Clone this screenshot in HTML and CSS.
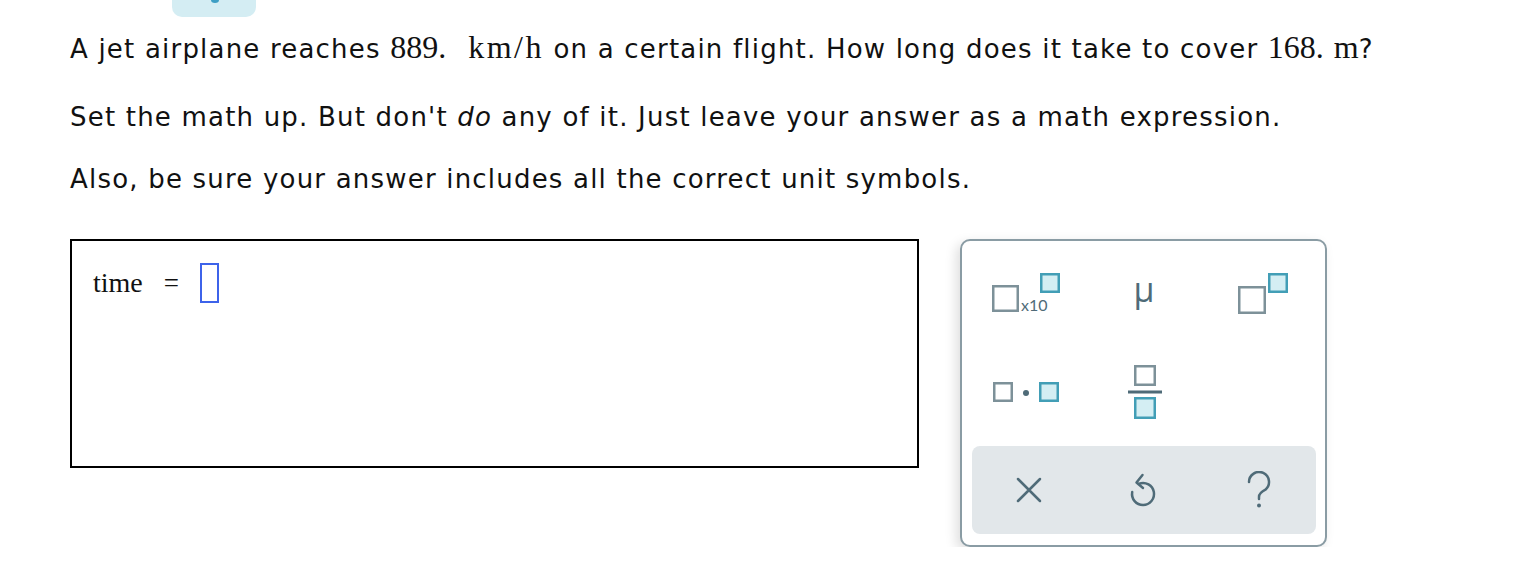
FILE: index.html
```html
<!DOCTYPE html>
<html>
<head>
<meta charset="utf-8">
<link rel="stylesheet" href="styles.css">
</head>
<body>
<div class="tab"><span class="tab-dot"></span></div>
<main class="content">
  <p class="q q1">A jet airplane reaches <span class="math">889.</span><span class="math unit">km/h</span> on a certain flight. How long does it take to cover <span class="math">168.</span><span class="math unit2">m</span>?</p>
  <p class="q q2">Set the math up. But don't <em>do</em> any of it. Just leave your answer as a math expression.</p>
  <p class="q q3">Also, be sure your answer includes all the correct unit symbols.</p>

  <div class="answer-row">
    <div class="answer-box">
      <div class="equation">
        <span class="var">time</span>
        <span class="eq">=</span>
        <span class="slot"></span>
      </div>
    </div>

    <div class="keypad">
      <div class="keys">
        <button class="key key-sci" aria-label="scientific notation">
          <svg width="70" height="42" viewBox="0 0 70 42">
            <rect class="g" x="3.25" y="15.25" width="24.5" height="24.5"/>
            <text class="x10" x="31" y="40">x10</text>
            <rect class="t" x="51.25" y="3.25" width="17.5" height="17.5"/>
          </svg>
        </button>
        <button class="key key-mu" aria-label="micro">μ</button>
        <button class="key key-sup" aria-label="superscript">
          <svg width="54" height="43" viewBox="0 0 54 43">
            <rect class="g" x="3.25" y="16.25" width="25.5" height="25.5"/>
            <rect class="t" x="33.25" y="3.25" width="17.5" height="17.5"/>
          </svg>
        </button>
        <button class="key key-dot" aria-label="multiply">
          <svg width="72" height="26" viewBox="0 0 72 26">
            <rect class="g" x="4.25" y="4.25" width="17.5" height="17.5"/>
            <circle class="d" cx="36" cy="14" r="3"/>
            <rect class="t" x="50.25" y="4.25" width="17.5" height="17.5"/>
          </svg>
        </button>
        <button class="key key-frac" aria-label="fraction">
          <svg width="38" height="58" viewBox="0 0 38 58">
            <rect class="g" x="9.25" y="3.25" width="19.5" height="18.5"/>
            <line class="bar" x1="2" y1="29" x2="36" y2="29"/>
            <rect class="t" x="9.25" y="35.25" width="19.5" height="19.5"/>
          </svg>
        </button>
        <span class="key empty"></span>
      </div>
      <div class="actions">
        <button class="act" aria-label="clear">
          <svg width="26" height="26" viewBox="0 0 26 26">
            <path class="s" d="M2 2 L24 24 M24 2 L2 24"/>
          </svg>
        </button>
        <button class="act" aria-label="undo">
          <svg width="30" height="36" viewBox="0 0 30 36">
            <path class="s" d="M10.2 11.7 A11 11 0 1 1 3.2 20.1"/>
            <path class="s" d="M13.5 3 L7.5 10.5 L14 16"/>
          </svg>
        </button>
        <button class="act" aria-label="help">
          <svg width="26" height="38" viewBox="0 0 26 38">
            <path class="s" d="M3 11 A10 10 0 1 1 19.4 18.7 Q13 22 13 26 V28"/>
            <circle class="d" cx="13" cy="34.5" r="2"/>
          </svg>
        </button>
      </div>
    </div>
  </div>
</main>
</body>
</html>
```

FILE: styles.css
```css
* { box-sizing: border-box; }

body {
  margin: 0;
  background: #ffffff;
  font-family: "DejaVu Sans", Verdana, sans-serif;
  color: #111111;
}

.tab {
  position: relative;
  margin-left: 172px;
  width: 84px;
  height: 17px;
  background: #d4edf3;
  border-radius: 0 0 10px 10px;
}

.tab-dot {
  position: absolute;
  left: 39px;
  top: -3px;
  width: 8px;
  height: 6px;
  border-radius: 50%;
  background: #3e9fc4;
}

.content {
  padding-left: 70px;
}

.q {
  margin: 0;
  font-size: 26px;
  letter-spacing: 1.2px;
  line-height: 30px;
  white-space: nowrap;
}

.q1 { margin-top: 15px; }
.q2 { margin-top: 38px; }
.q3 { margin-top: 32px; }

.math {
  font-family: "Liberation Serif", "Times New Roman", serif;
  font-size: 32px;
  letter-spacing: 0;
}

.unit { margin-left: 22px; letter-spacing: 2.5px; }
.unit2 { margin-left: 10px; }

.answer-row {
  display: flex;
  align-items: flex-start;
  margin-top: 45px;
}

.answer-box {
  width: 849px;
  height: 229px;
  border: 2px solid #000000;
  padding: 22px 0 0 21px;
}

.equation {
  display: flex;
  align-items: center;
  font-family: "Liberation Serif", "Times New Roman", serif;
  font-size: 28px;
  color: #111111;
}

.eq {
  margin-left: 21px;
  font-size: 27px;
}

.slot {
  width: 19px;
  height: 40px;
  margin-left: 21px;
  border: 2px solid #3d63ea;
}

.keypad {
  margin-left: 41px;
  width: 367px;
  height: 308px;
  border: 2px solid #8a9ca4;
  border-radius: 10px;
  background: #ffffff;
  box-shadow: -4px 4px 12px rgba(0, 0, 0, 0.13);
  padding: 1px 9px 10px 10px;
}

.keys {
  display: grid;
  grid-template-columns: repeat(3, 1fr);
  grid-template-rows: 100px 100px;
}

.key, .act {
  border: 0;
  background: transparent;
  padding: 0;
  display: flex;
  align-items: center;
  justify-content: center;
  color: #4f6b78;
}

.key-sci svg { margin-right: 8px; }
.key-sup svg { margin-left: 8px; }
.key-dot svg { margin-right: 6px; }
.key-frac svg { margin-left: 2px; }

.key-mu {
  font-family: "Open Sans", sans-serif;
  font-size: 34px;
  line-height: 1;
  padding-bottom: 6px;
}

.actions {
  margin-top: 4px;
  height: 88px;
  background: #e2e7ea;
  border-radius: 8px;
  display: grid;
  grid-template-columns: repeat(3, 1fr);
}

.act svg { display: block; }

svg .g {
  fill: #ffffff;
  stroke: #7d9199;
  stroke-width: 2.5;
}

svg .t {
  fill: #d4eef3;
  stroke: #429eb6;
  stroke-width: 2.5;
}

svg .d { fill: #4f6b78; }

svg .bar {
  stroke: #4f6b78;
  stroke-width: 3;
}

svg .x10 {
  fill: #4f6b78;
  font-family: "Lato", "Open Sans", sans-serif;
  font-size: 16px;
}

svg .s {
  fill: none;
  stroke: #4f6b78;
  stroke-width: 2.5;
  stroke-linecap: round;
  stroke-linejoin: round;
}
```
